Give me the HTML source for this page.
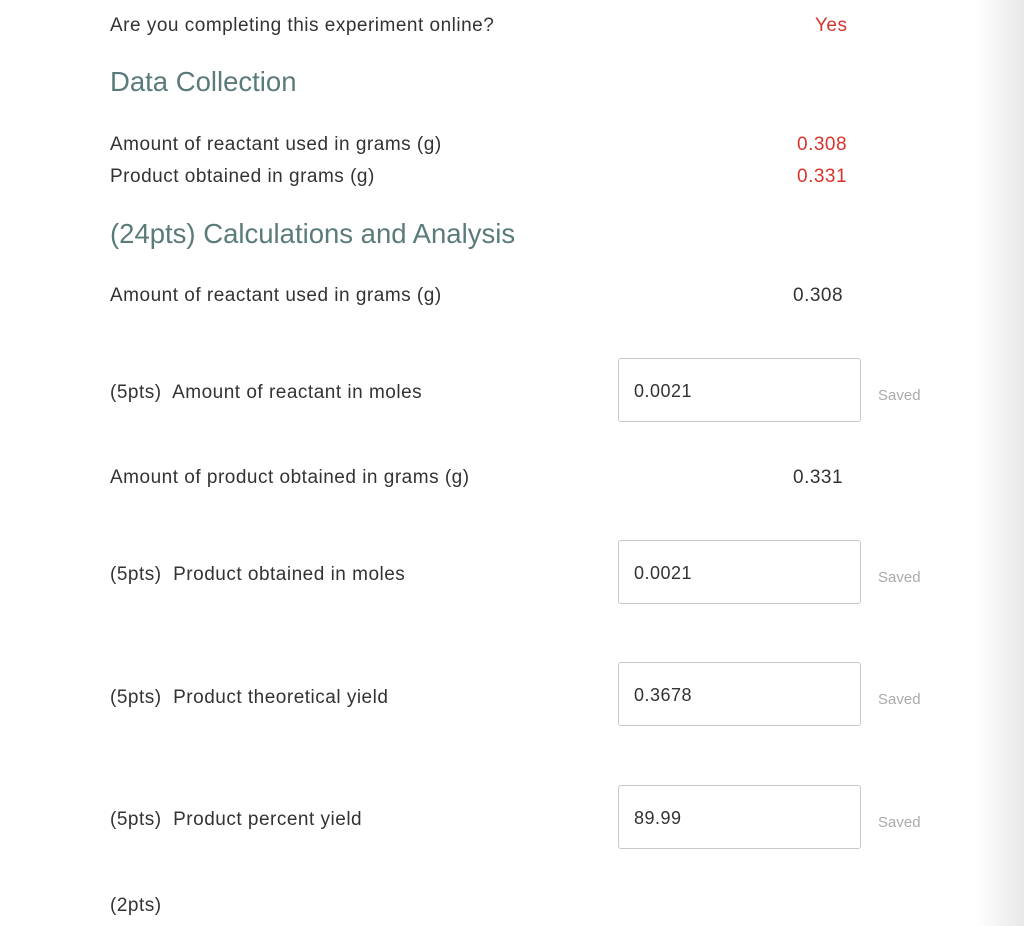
<!DOCTYPE html>
<html><head><meta charset="utf-8"><style>
html,body{margin:0;padding:0;}
body{width:1024px;height:926px;position:relative;overflow:hidden;background:#fff;font-family:"Liberation Sans",Arial,sans-serif;color:#333;}
.shade{position:absolute;right:0;top:0;width:50px;height:926px;background:linear-gradient(to right,rgba(0,0,0,0),rgba(0,0,0,0.09));}
.t{position:absolute;font-size:19px;letter-spacing:0.5px;line-height:24px;white-space:nowrap;margin-top:2px;}
.h{position:absolute;font-size:27.5px;line-height:32px;color:#5b7b7b;white-space:nowrap;}
.r{color:#d8342c;}
.box{position:absolute;left:618px;width:243px;height:64px;border:1px solid #c8c8c8;border-radius:3px;box-sizing:border-box;font-size:18px;letter-spacing:0.5px;line-height:64px;padding-left:15px;color:#333;}
.s{position:absolute;left:878px;font-size:15px;color:#aaa;line-height:18px;margin-top:1px;}
</style></head><body>
<div class="shade"></div>
<div class="t" style="left:110px;top:12px">Are you completing this experiment online?</div>
<div class="t r" style="left:815px;top:12px">Yes</div>
<div class="h" style="left:110px;top:66px">Data Collection</div>
<div class="t" style="left:110px;top:131px">Amount of reactant used in grams (g)</div>
<div class="t r" style="left:797px;top:131px">0.308</div>
<div class="t" style="left:110px;top:163px">Product obtained in grams (g)</div>
<div class="t r" style="left:797px;top:163px">0.331</div>
<div class="h" style="left:110px;top:218px">(24pts) Calculations and Analysis</div>
<div class="t" style="left:110px;top:282px">Amount of reactant used in grams (g)</div>
<div class="t" style="left:793px;top:282px">0.308</div>
<div class="t" style="left:110px;top:379px">(5pts)&nbsp; Amount of reactant in moles</div>
<div class="box" style="top:358px">0.0021</div><div class="s" style="top:386px">Saved</div>
<div class="t" style="left:110px;top:464px">Amount of product obtained in grams (g)</div>
<div class="t" style="left:793px;top:464px">0.331</div>
<div class="t" style="left:110px;top:561px">(5pts)&nbsp; Product obtained in moles</div>
<div class="box" style="top:540px">0.0021</div><div class="s" style="top:568px">Saved</div>
<div class="t" style="left:110px;top:684px">(5pts)&nbsp; Product theoretical yield</div>
<div class="box" style="top:662px">0.3678</div><div class="s" style="top:690px">Saved</div>
<div class="t" style="left:110px;top:806px">(5pts)&nbsp; Product percent yield</div>
<div class="box" style="top:785px">89.99</div><div class="s" style="top:813px">Saved</div>
<div class="t" style="left:110px;top:892px">(2pts)</div>
</body></html>
